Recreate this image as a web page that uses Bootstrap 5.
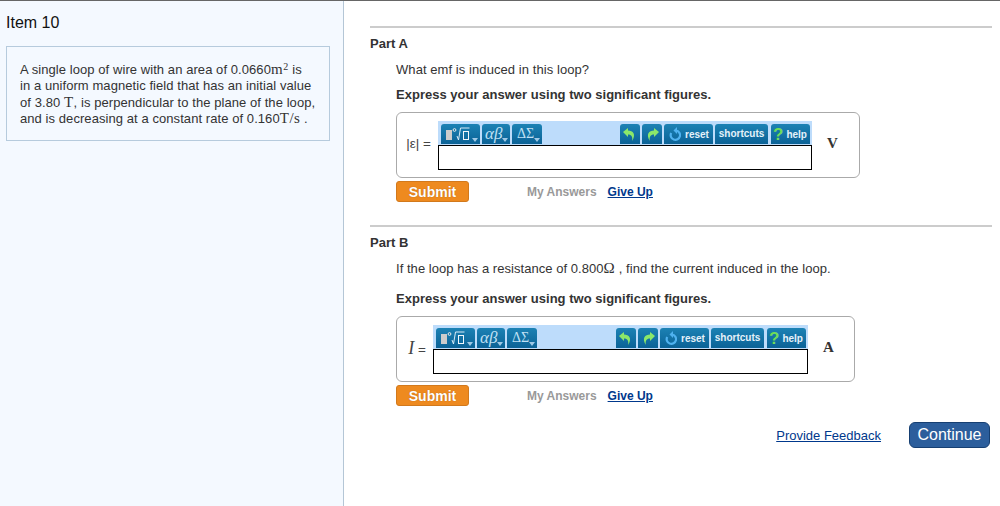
<!DOCTYPE html>
<html lang="en"><head><meta charset="utf-8"><title>Item 10</title>
<link href="https://cdn.jsdelivr.net/npm/bootstrap@5.3.0/dist/css/bootstrap.min.css" rel="stylesheet">
<style>
html,body{height:506px;overflow:hidden;background:#fff}
body{font-family:"Liberation Sans",Arial,sans-serif;font-size:13px;color:#333;border-top:1px solid #666}
.shell{height:505px}
.side{width:344px;flex:none;background:#f4f9ff;border-right:1px solid #b4c6d6;padding:13px 6px 0}
.item-title{font-size:16px;line-height:18px;color:#111;margin:0 0 14px}
.stem{width:324px;height:95px;border:1px solid #b6cbdd;padding:15px 0 0 13px;font-size:13px;line-height:16.33px;color:#333;letter-spacing:.07px}
.mth{font-family:"Liberation Serif",serif;font-size:15px;line-height:1;letter-spacing:.5px}
.mth sup{font-size:10px;top:-.4em;line-height:0}
.main{flex:1;padding:25px 8px 0 26px}
.part{border-top:2px solid #ccc;padding-top:8px}
.part-a{height:199px}
.part-b{height:196px}
.part-h{font-weight:700;font-size:13px;line-height:16px;color:#333;margin:0}
.part-body{margin-left:26px}
.q{line-height:16px;margin:10px 0 0;letter-spacing:.07px}
.hint{font-weight:700;line-height:16px;margin:9px 0 0;letter-spacing:.02px}
.q-b{margin-top:10px;letter-spacing:.04px}
.hint-b{margin-top:14px}
.ansbox{height:66px;border:1px solid #aaa;border-radius:6px;margin-top:9px;padding-top:8px;width:464px}
.ansbox-b{width:459px}
.lbl{width:41px;flex:none;padding-right:7px;text-align:right;line-height:46px;font-size:13.5px;color:#444}
.lbl-b{width:36px;padding-right:7px;white-space:nowrap}
.lbl i{font-family:"Liberation Serif",serif;font-size:18px}
.editor{width:374px;flex:none}
.editor-b{width:375px}
.tb{height:24px;background:#bddcfb;padding:3px 2px 0 3px;gap:2px}
.tbtn{height:20px;background:linear-gradient(#1c82b4,#0b6296);border-radius:3px 3px 0 0;color:#e4f1fa;font-size:10px;font-weight:700;line-height:19px;border:0;position:relative;white-space:nowrap;flex:none;text-align:center}
.tbtn svg{display:block}
.sym{font-family:"Liberation Serif",serif;font-size:17px;font-weight:400;color:#bfe0f5;font-style:italic;text-align:left}
.sym-u{font-style:normal;font-size:14px}
.caret-dn{position:absolute;right:2px;bottom:2px;border:3px solid transparent;border-top:4px solid #9fc9e6;border-bottom:0}
.w-t{width:39px;padding-left:5px}.w-a{width:28px;padding-left:3px}.w-d{width:30px;padding-left:5px}
.w-i{width:20px;padding:2px 0 0 2px}
.w-r{width:49px;padding-left:5px}
.w-s{width:53px}
.w-h{width:39px;padding-left:2px;margin-left:1px;gap:3px}
.q-mark{color:#6fdc5a;font-size:17px;font-weight:700;line-height:1}
.field{height:25px;background:#fff;border:1px solid #000}
.unit{font-family:"Liberation Serif",serif;font-weight:700;font-size:15px;line-height:44px;padding-left:15px;color:#333}
.acts{height:21px;margin-top:3px}
.submit{width:73px;height:21px;padding:0;background:#ee8a1f;border:1px solid #d2791c;border-radius:3px;color:#fff;font-weight:700;font-size:14px;line-height:18px;text-shadow:0 0 1px rgba(120,60,0,.6)}
.submit:hover{background:#ee8a1f;color:#fff;border-color:#d2791c}
.mya{margin-left:58px;font-size:12px;font-weight:700;color:#999}
.gu{margin-left:11px;font-size:12px;font-weight:700;color:#00388c}
.foot{height:26px;padding-right:2px;margin-top:1px}
.fb{color:#00388c;font-size:13px;margin-right:28px;padding-top:1px}
.cont{width:81px;height:26px;padding:0;background:#2c5e9c;border:1px solid #163f72;border-radius:6px;color:#fff;font-size:16px;line-height:22px}
.cont:hover{background:#2c5e9c;color:#fff;border-color:#163f72}
</style></head>
<body>
<div class="shell d-flex">
<aside class="side">
<h1 class="item-title fw-normal">Item 10</h1>
<div class="stem">A single loop of wire with an area of 0.0660<span class="mth">m<sup>2</sup></span> is<br>in a uniform magnetic field that has an initial value<br>of 3.80 <span class="mth">T</span>, is perpendicular to the plane of the loop,<br>and is decreasing at a constant rate of 0.160<span class="mth">T/s</span> .</div>
</aside>
<main class="main">
<section class="part part-a">
<h2 class="part-h">Part A</h2>
<div class="part-body">
<p class="q">What emf is induced in this loop?</p>
<p class="hint">Express your answer using two significant figures.</p>
<div class="ansbox d-flex">
<div class="lbl">|ε| =</div>
<div class="editor">
<div class="tb d-flex">
<div class="tbtn w-t"><svg width="30" height="18" viewBox="0 0 30 18"><rect x="0" y="6" width="6" height="10" fill="#ccc"/><circle cx="8.5" cy="6" r="1.4" fill="none" stroke="#e8e8e8"/><path d="M11 12l1.5 4 2-12h9" fill="none" stroke="#d8ebf7"/><rect x="17.5" y="7.5" width="5" height="8" fill="none" stroke="#f0f7fc"/></svg><span class="caret-dn"></span></div>
<div class="tbtn w-a sym">αβ<span class="caret-dn"></span></div>
<div class="tbtn w-d sym sym-u">ΔΣ<span class="caret-dn"></span></div>
<div class="ms-auto"></div>
<div class="tbtn w-i"><svg width="16" height="16" viewBox="0 0 16 16"><path d="M1 6l5-4v2.500c5 0 8.500 4 4 10.500 1-4-.5-6.500-4-6.500v2.500z" fill="#8be86a"/></svg></div>
<div class="tbtn w-i"><svg width="16" height="16" viewBox="0 0 16 16"><path d="M15 6l-5-4v2.500c-5 0-8.500 4-4 10.500-1-4 .5-6.500 4-6.500v2.500z" fill="#8be86a"/></svg></div>
<div class="tbtn w-r d-flex align-items-center gap-1"><svg width="12" height="16" viewBox="0 0 12 16"><path d="M7 4.500a4.700 4.700 0 1 1-4.800 2.500" fill="none" stroke="#4fb2ef" stroke-width="2.200"/><path d="M8 1v7L4.500 4.500z" fill="#4fb2ef"/></svg>reset</div>
<div class="tbtn w-s">shortcuts</div>
<div class="tbtn w-h d-flex align-items-center"><span class="q-mark">?</span>help</div>
</div>
<div class="field"></div>
</div>
<div class="unit">V</div>
</div>
<div class="acts d-flex align-items-center">
<button class="btn submit" type="button">Submit</button>
<span class="mya">My Answers</span>
<a class="gu" href="#">Give Up</a>
</div>
</div>
</section>
<section class="part part-b">
<h2 class="part-h">Part B</h2>
<div class="part-body">
<p class="q q-b">If the loop has a resistance of 0.800<span class="mth">Ω</span> , find the current induced in the loop.</p>
<p class="hint hint-b">Express your answer using two significant figures.</p>
<div class="ansbox ansbox-b d-flex">
<div class="lbl lbl-b"><i>I</i> =</div>
<div class="editor editor-b">
<div class="tb d-flex">
<div class="tbtn w-t"><svg width="30" height="18" viewBox="0 0 30 18"><rect x="0" y="6" width="6" height="10" fill="#ccc"/><circle cx="8.5" cy="6" r="1.4" fill="none" stroke="#e8e8e8"/><path d="M11 12l1.5 4 2-12h9" fill="none" stroke="#d8ebf7"/><rect x="17.5" y="7.5" width="5" height="8" fill="none" stroke="#f0f7fc"/></svg><span class="caret-dn"></span></div>
<div class="tbtn w-a sym">αβ<span class="caret-dn"></span></div>
<div class="tbtn w-d sym sym-u">ΔΣ<span class="caret-dn"></span></div>
<div class="ms-auto"></div>
<div class="tbtn w-i"><svg width="16" height="16" viewBox="0 0 16 16"><path d="M1 6l5-4v2.500c5 0 8.500 4 4 10.500 1-4-.5-6.500-4-6.500v2.500z" fill="#8be86a"/></svg></div>
<div class="tbtn w-i"><svg width="16" height="16" viewBox="0 0 16 16"><path d="M15 6l-5-4v2.500c-5 0-8.500 4-4 10.500-1-4 .5-6.500 4-6.500v2.500z" fill="#8be86a"/></svg></div>
<div class="tbtn w-r d-flex align-items-center gap-1"><svg width="12" height="16" viewBox="0 0 12 16"><path d="M7 4.500a4.700 4.700 0 1 1-4.800 2.500" fill="none" stroke="#4fb2ef" stroke-width="2.200"/><path d="M8 1v7L4.500 4.500z" fill="#4fb2ef"/></svg>reset</div>
<div class="tbtn w-s">shortcuts</div>
<div class="tbtn w-h d-flex align-items-center"><span class="q-mark">?</span>help</div>
</div>
<div class="field"></div>
</div>
<div class="unit">A</div>
</div>
<div class="acts d-flex align-items-center">
<button class="btn submit" type="button">Submit</button>
<span class="mya">My Answers</span>
<a class="gu" href="#">Give Up</a>
</div>
</div>
</section>
<div class="foot d-flex justify-content-end align-items-center">
<a class="fb" href="#">Provide Feedback</a>
<button class="btn cont" type="button">Continue</button>
</div>
</main>
</div>
</body></html>
